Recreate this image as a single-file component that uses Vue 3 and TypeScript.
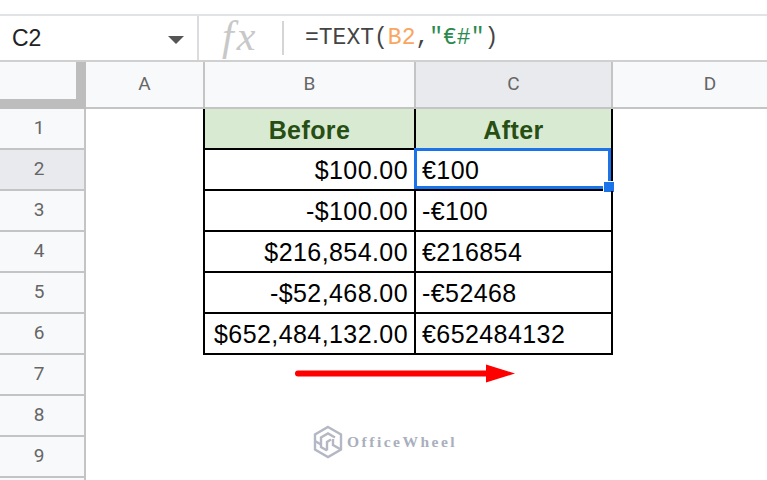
<script setup lang="ts">
interface Row {
  num: number
  before?: string
  after?: string
  head?: boolean
}

const columns = ['A', 'B', 'C', 'D']

const rows: Row[] = [
  { num: 1, before: 'Before', after: 'After', head: true },
  { num: 2, before: '$100.00', after: '€100' },
  { num: 3, before: '-$100.00', after: '-€100' },
  { num: 4, before: '$216,854.00', after: '€216854' },
  { num: 5, before: '-$52,468.00', after: '-€52468' },
  { num: 6, before: '$652,484,132.00', after: '€652484132' },
  { num: 7 },
  { num: 8 },
  { num: 9 },
]
</script>

<template>
  <div class="page">
    <div class="formula-bar">
      <div class="name-box">
        <span>C2</span>
        <i class="caret"></i>
      </div>
      <div class="fx">fx</div>
      <div class="formula">=TEXT(<span class="ref">B2</span>,<span class="str">"€#"</span>)</div>
    </div>

    <div class="sheet">
      <div class="corner"></div>
      <div
        v-for="c in columns"
        :key="c"
        class="col-head"
        :class="{ active: c === 'C' }"
      >{{ c }}</div>

      <template v-for="r in rows" :key="r.num">
        <div class="row-head" :class="{ active: r.num === 2 }">{{ r.num }}</div>
        <div class="cell"></div>
        <div class="cell b" :class="{ data: r.before, green: r.head }">{{ r.before }}</div>
        <div class="cell c" :class="{ data: r.after, green: r.head }">
          {{ r.after }}
          <div v-if="r.num === 2" class="selection"><i class="handle"></i></div>
        </div>
        <div class="cell"></div>
      </template>

      <div class="row-head"></div>
    </div>

    <svg class="arrow" width="224" height="22" viewBox="0 0 224 22">
      <path d="M4 10.5H195" stroke="#ff0000" stroke-width="6" stroke-linecap="round" />
      <path d="M192 1.5L221 10.5L192 19.5Z" fill="#ff0000" />
    </svg>

    <div class="logo">
      <svg width="32" height="34" viewBox="0 0 32 34" fill="none" stroke="#b4b8c4" stroke-width="2.4">
        <path d="M16 2L29 9.5V24.5L16 32L3 24.5V9.5Z" />
        <path d="M23 12.5L16 8.5L9 12.5V22L15 25.5" />
        <path d="M3 16L9 19.5M29 24.5L21 20V14" />
        <path d="M15 25.5V17L19 14.5" />
      </svg>
      <span>OfficeWheel</span>
    </div>
  </div>
</template>

<style scoped>
.page {
  position: relative;
  width: 767px;
  height: 480px;
  overflow: hidden;
  background: #fff;
  padding-top: 14px;
  box-sizing: border-box;
  font-family: Roboto, "Liberation Sans", sans-serif;
}

.formula-bar {
  display: flex;
  align-items: center;
  height: 48px;
  box-sizing: border-box;
  border-top: 2px solid #e2e3e6;
  border-bottom: 2px solid #d0d0d0;
}

.name-box {
  width: 199px;
  height: 100%;
  box-sizing: border-box;
  display: flex;
  align-items: center;
  justify-content: space-between;
  padding: 0 13px 0 12px;
  border-right: 2px solid #dadce0;
  font-family: "Liberation Sans", sans-serif;
  font-size: 23px;
  color: #222;
}

.caret {
  margin-top: 4px;
  border-left: 8px solid transparent;
  border-right: 8px solid transparent;
  border-top: 8px solid #555;
}

.fx {
  width: 85px;
  height: 34px;
  box-sizing: border-box;
  border-right: 2px solid #d5d5d5;
  padding-left: 23px;
  font-family: "Liberation Serif", serif;
  font-style: italic;
  font-size: 42px;
  letter-spacing: 3px;
  line-height: 30px;
  color: #c8c8c8;
}

.formula {
  padding-left: 21px;
  font-family: "Liberation Mono", monospace;
  font-size: 23px;
  color: #444;
}

.ref {
  color: #f9a65f;
}

.str {
  color: #2b8a4e;
}

.sheet {
  display: grid;
  grid-template-columns: 86px 119px 211px 197px 196px;
  grid-template-rows: 47px repeat(10, 41px);
}

.corner {
  box-sizing: border-box;
  background: #f8f9fa;
  border-right: 10px solid #bdbdbd;
  border-bottom: 10px solid #bdbdbd;
}

.col-head,
.row-head {
  display: flex;
  align-items: center;
  justify-content: center;
  box-sizing: border-box;
  background: #f8f9fa;
  border-right: 2px solid #c4c4c4;
  border-bottom: 2px solid #c4c4c4;
  font-size: 19px;
  color: #666;
}

.col-head {
  padding-bottom: 3px;
}

.row-head {
  padding-right: 6px;
  padding-bottom: 2px;
}

.col-head.active,
.row-head.active {
  background: #e8eaed;
}

.cell {
  position: relative;
  box-sizing: border-box;
  display: flex;
  align-items: center;
  padding-top: 1px;
  font-family: "Liberation Sans", sans-serif;
  font-size: 25px;
  letter-spacing: 0.42px;
  color: #000;
  white-space: nowrap;
}

.cell.data {
  border-right: 2px solid #000;
  border-bottom: 2px solid #000;
}

.cell.b.data {
  margin-left: -2px;
  border-left: 2px solid #000;
}

.cell.b {
  justify-content: flex-end;
  padding-right: 6px;
}

.cell.c {
  padding-left: 6px;
}

.cell.green {
  justify-content: center;
  padding: 3px 0 0;
  background: #d9ead3;
  color: #274e13;
  font-weight: 700;
}

.selection {
  position: absolute;
  left: -2px;
  top: -2px;
  right: 0;
  bottom: 0;
  border: 3px solid #1a73e8;
}

.handle {
  position: absolute;
  right: -7px;
  bottom: -7px;
  width: 10px;
  height: 10px;
  background: #1a73e8;
  border: 1px solid #fff;
}

.arrow {
  position: absolute;
  left: 294px;
  top: 363px;
}

.logo {
  position: absolute;
  left: 312px;
  top: 425px;
  display: flex;
  align-items: center;
  gap: 3px;
  font-family: "Liberation Serif", serif;
  font-weight: 700;
  font-size: 15.5px;
  letter-spacing: 2.5px;
  color: #a9afbd;
}
</style>
